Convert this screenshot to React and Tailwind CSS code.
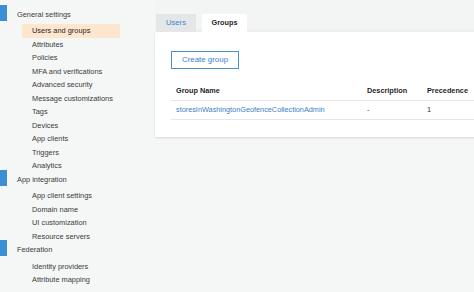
import React from "react";

const font = { fontFamily: '"Liberation Sans", Arial, sans-serif' };

function Header({ children }) {
  return (
    <div className="relative h-[16.5px]">
      <div className="absolute left-0 top-[-3px] h-[16px] w-[7px] bg-[#3d8fd3]" />
      <div className="pl-[17px] text-[7.4px] leading-[14.5px] text-[#3a3a3a]">{children}</div>
    </div>
  );
}

function Item({ children, active }) {
  return (
    <div
      className={
        "ml-[22px] w-[98px] h-[13.5px] pl-[10px] text-[7.4px] leading-[13.5px] " +
        (active ? "bg-[#fce6cd] text-[#1f1f1f]" : "text-[#3a3a3a]")
      }
    >
      {children}
    </div>
  );
}

export default function App() {
  return (
    <div className="w-[474px] h-[292px] overflow-hidden bg-[#f5f6f6] flex" style={font}>
      <div className="w-[155px] shrink-0 pt-[7.75px]">
        <Header>General settings</Header>
        <Item active>Users and groups</Item>
        <Item>Attributes</Item>
        <Item>Policies</Item>
        <Item>MFA and verifications</Item>
        <Item>Advanced security</Item>
        <Item>Message customizations</Item>
        <Item>Tags</Item>
        <Item>Devices</Item>
        <Item>App clients</Item>
        <Item>Triggers</Item>
        <Item>Analytics</Item>
        <Header>App integration</Header>
        <Item>App client settings</Item>
        <Item>Domain name</Item>
        <Item>UI customization</Item>
        <Item>Resource servers</Item>
        <Header>Federation</Header>
        <Item>Identity providers</Item>
        <Item>Attribute mapping</Item>
      </div>
      <div className="flex-1 min-w-0">
        <div className="box-content h-[29px] bg-[#f3f4f4] border-b-[3px] border-[#eef0f0] flex items-end pl-[1px] gap-[6px]">
          <div className="w-[40px] h-[18px] mb-[-3px] bg-[#e4e6e7] text-[#3a87cf] font-medium text-[7.7px] leading-[18px] text-center">
            Users
          </div>
          <div className="w-[45px] h-[18px] mb-[-3px] bg-white text-[#1f1f1f] font-bold text-[7.3px] leading-[18px] text-center">
            Groups
          </div>
        </div>
        <div className="bg-white w-[400px] pt-[19px] pb-[17px] pl-[16px] shadow-[0_1px_2px_rgba(0,0,0,0.12)]">
          <div className="w-[68px] h-[18px] border border-[#4a90cf] text-[#3a82c6] text-[7.9px] leading-[16px] text-center">
            Create group
          </div>
          <div className="mt-[14px] text-[7.3px]">
            <div className="grid grid-cols-[191px_60px_1fr] h-[18px] items-center border-b border-[#e5e7e8] font-bold text-[#1f1f1f]">
              <div className="pl-[5px]">Group Name</div>
              <div className="pl-[5px]">Description</div>
              <div className="pl-[5px]">Precedence</div>
            </div>
            <div className="grid grid-cols-[191px_60px_1fr] h-[19px] items-center border-b border-[#e5e7e8] text-[#333]">
              <div className="pl-[5px] text-[#3a7fc2] whitespace-nowrap">storesInWashingtonGeofenceCollectionAdmin</div>
              <div className="pl-[5px]">-</div>
              <div className="pl-[5px]">1</div>
            </div>
          </div>
        </div>
      </div>
    </div>
  );
}
